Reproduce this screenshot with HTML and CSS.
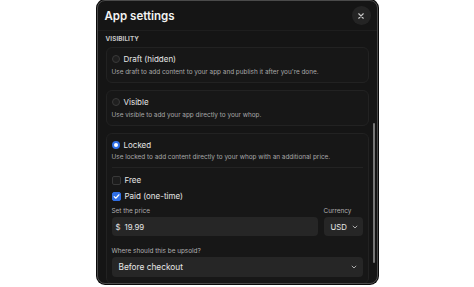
FILE: index.html
```html
<!DOCTYPE html>
<html lang="en">
<head>
	<meta charset="UTF-8">
	<title>App settings</title>
	<link rel="stylesheet" href="styles.css">
</head>
<body>
	<div class="modal">
		<div class="modal-head">
			<h1 class="title">App settings</h1>
			<span class="close">
				<svg width="6" height="6" viewBox="0 0 8 8"><path d="M1 1L7 7M7 1L1 7" stroke="#c8c8c8" stroke-width="1.5" stroke-linecap="round"/></svg>
			</span>
		</div>
		<div class="modal-body">
			<div class="section-label">VISIBILITY</div>

			<div class="card">
				<div class="option"><span class="radio"></span>Draft (hidden)</div>
				<p class="desc">Use draft to add content to your app and publish it after you're done.</p>
			</div>

			<div class="card">
				<div class="option"><span class="radio"></span>Visible</div>
				<p class="desc">Use visible to add your app directly to your whop.</p>
			</div>

			<div class="card card-open">
				<div class="option"><span class="radio on"></span>Locked</div>
				<p class="desc">Use locked to add content directly to your whop with an additional price.</p>
				<div class="divider"></div>
				<div class="check-row"><span class="check"></span>Free</div>
				<div class="check-row"><span class="check on">
					<svg width="7" height="7" viewBox="0 0 8 8"><path d="M1.3 4.2L3.2 6L6.8 2" fill="none" stroke="#fff" stroke-width="1.3" stroke-linecap="round" stroke-linejoin="round"/></svg>
				</span>Paid (one-time)</div>

				<div class="price-row">
					<div class="field grow">
						<label class="field-label">Set the price</label>
						<div class="input"><span class="dollar">$</span>19.99</div>
					</div>
					<div class="field">
						<label class="field-label">Currency</label>
						<div class="input select small">USD
							<svg width="6" height="4" viewBox="0 0 6 4"><path d="M0.8 0.8L3 3L5.2 0.8" fill="none" stroke="#bbb" stroke-width="0.9"/></svg>
						</div>
					</div>
				</div>

				<div class="field upsell">
					<label class="field-label">Where should this be upsold?</label>
					<div class="input select big">Before checkout
						<svg width="6" height="4" viewBox="0 0 6 4"><path d="M0.8 0.8L3 3L5.2 0.8" fill="none" stroke="#bbb" stroke-width="0.9"/></svg>
					</div>
				</div>
			</div>
		</div>
		<span class="scrollbar"></span>
	</div>
</body>
</html>
```

FILE: styles.css
```css
*{margin:0;padding:0;box-sizing:border-box}
body{
	background:#fff;
	font-family:"Inter","Liberation Sans",sans-serif;
	display:flex;
	justify-content:center;
	height:287px;
	overflow:hidden;
}
.modal{
	width:281px;
	height:284px;
	background:#151515;
	border:1px solid #4a4a4a;
	border-radius:8px;
	box-shadow:0 0 0 1px #0a0a0a;
	position:relative;
	overflow:hidden;
	color:#e8e8e8;
}
.modal-head{
	height:30px;
	display:flex;
	align-items:center;
	justify-content:space-between;
	padding:0 6px 0 7px;
	border-bottom:1px solid #1e1e1e;
}
.title{
	font-size:11.5px;
	font-weight:600;
	color:#f2f2f2;
}
.close{
	width:19px;
	height:19px;
	border-radius:50%;
	background:#242424;
	display:flex;
	align-items:center;
	justify-content:center;
}
.modal-body{
	padding:3px 8px 0 8px;
	display:flex;
	flex-direction:column;
}
.section-label{
	font-size:6.3px;
	font-weight:700;
	color:#c8c8c8;
	letter-spacing:0.1px;
	height:13px;
	line-height:10px;
}
.card{
	border:1px solid #222;
	background:#171717;
	border-radius:6px;
	padding:5px 5px 6px;
	margin-bottom:7px;
	height:36px;
}
.card-open{
	height:auto;
}
.option{
	display:flex;
	align-items:center;
	gap:4px;
	font-size:8px;
	color:#e6e6e6;
	height:12px;
}
.radio{
	width:8px;
	height:8px;
	border-radius:50%;
	border:1px solid #3a3a3a;
	background:#1f1f1f;
}
.radio.on{
	border:2px solid #2f6fe6;
	background:#fff;
}
.desc{
	font-size:6.4px;
	color:#a8a8a8;
	margin-top:3px;
	white-space:nowrap;
}
.card-open .desc{
	margin-top:2px;
}
.divider{
	height:1px;
	background:#232323;
	margin:6px 0 4px;
}
.check-row{
	display:flex;
	align-items:center;
	gap:4px;
	font-size:8px;
	color:#e6e6e6;
	height:16px;
}
.check{
	width:9px;
	height:9px;
	border-radius:2px;
	border:1px solid #383838;
	background:#1c1c1c;
	display:flex;
	align-items:center;
	justify-content:center;
}
.check.on{
	background:#2f6fe6;
	border-color:#2f6fe6;
}
.price-row{
	display:flex;
	gap:6px;
	margin-top:3px;
}
.field{
	display:flex;
	flex-direction:column;
}
.grow{
	flex:1;
}
.field-label{
	font-size:6.4px;
	color:#b0b0b0;
	height:9px;
	margin-bottom:1px;
	white-space:nowrap;
}
.input{
	height:19px;
	background:#262626;
	border-radius:4px;
	display:flex;
	align-items:center;
	padding:0 6px 0 4px;
	font-size:7.8px;
	color:#e6e6e6;
}
.dollar{
	margin-right:4px;
}
.select{
	justify-content:space-between;
	gap:4px;
}
.small{
	width:39px;
	padding:0 5px 0 7px;
}
.upsell{
	margin-top:11px;
}
.big{
	height:20px;
	padding:0 6px 0 7px;
	font-size:8.3px;
}
.scrollbar{
	position:absolute;
	right:2px;
	top:122px;
	width:2px;
	height:140px;
	background:#777;
	border-radius:1px;
}
```
